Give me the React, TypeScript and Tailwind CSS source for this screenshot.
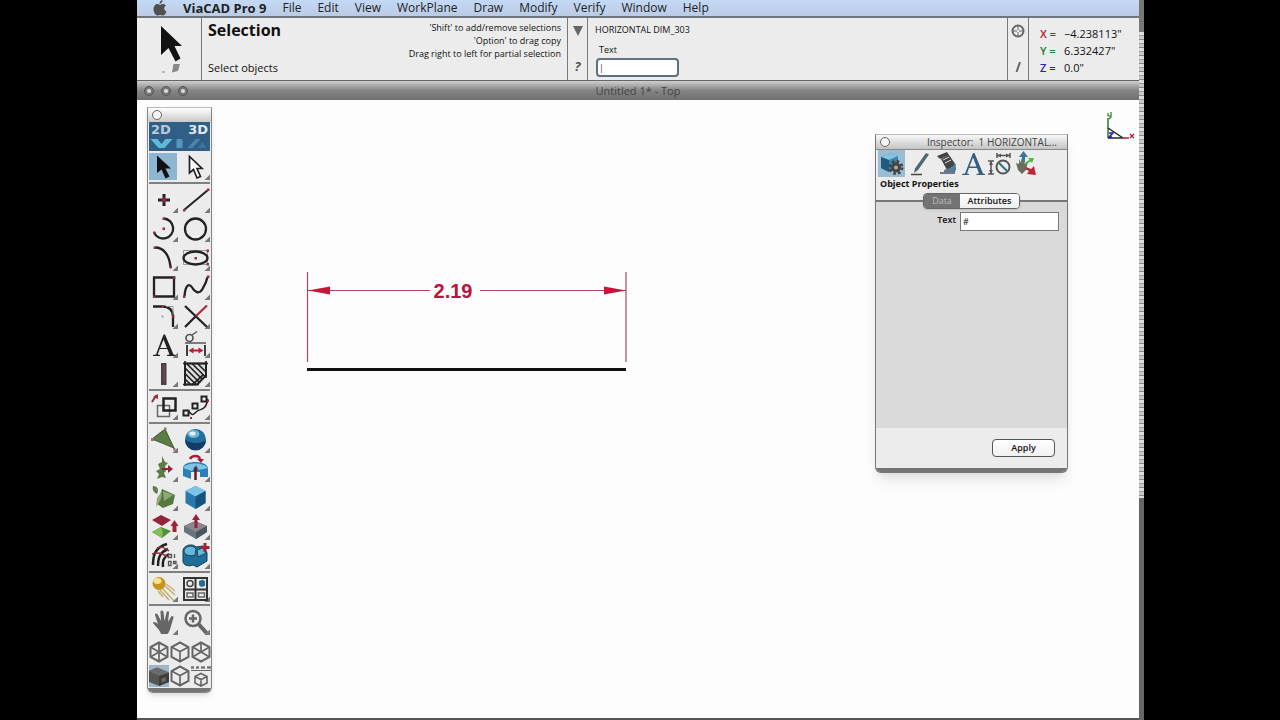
import type { ReactNode } from "react";

const MENUS = ["File", "Edit", "View", "WorkPlane", "Draw", "Modify", "Verify", "Window", "Help"];

function Corner() {
  return <path d="M30 22.5v5.5h-5.5z" fill="#777" />;
}

type ToolProps = { label: string; children: ReactNode; selected?: boolean; corner?: boolean };

function Tool({ label, children, selected = false, corner = true }: ToolProps) {
  return (
    <button type="button" aria-label={label} className="h-[29px] w-[31px]">
      <svg viewBox="0 0 31 29" className="block h-[29px] w-[31px]" fill="none" stroke="none">
        {selected && <rect x="1" y="1" width="28" height="27" fill="#8db6d3" />}
        {corner && <Corner />}
        {children}
      </svg>
    </button>
  );
}

function Separator() {
  return <div className="mx-px my-px h-0.5 bg-[#7f7f7f]" />;
}

function Row({ children }: { children: ReactNode }) {
  return <div className="grid grid-cols-2">{children}</div>;
}

const CUBE = "M12 2.5 L20.5 7 V17 L12 21.5 L3.5 17 V7 Z";

function ViewTool({ label, inner, variant = "wire" }: { label: string; inner?: string; variant?: "wire" | "solid" | "hidden" }) {
  return (
    <button type="button" aria-label={label} className="flex h-6 items-center justify-center">
      <svg viewBox="2 1 20 22" className="block h-[22px] w-5" fill="none" stroke="#666" strokeWidth="2">
        {variant === "wire" && (
          <>
            <path d={CUBE} />
            <path d={inner} strokeWidth="1.7" />
          </>
        )}
        {variant === "solid" && (
          <g stroke="none">
            <rect width="24" height="24" fill="#9db7c8" />
            <path d="M2 7 10 3.500 22 8.5 21 18 12 22 2 18Z" fill="#555" />
            <path d="M2 7 10 3.500 22 8.5 12 12Z" fill="#6b6b6b" />
            <path d="M12 12 22 9v9l-10 4z" fill="#3c3c3c" />
            <path d="M14.500 14.5l4.500-1.500v4l-4.500 2z" fill="#666" />
          </g>
        )}
        {variant === "hidden" && (
          <>
            <path d="M2 3.5h3M7 3.5h3M12 3.5h4M18 3.5h4" strokeWidth="2.5" stroke="#777" />
            <path d="M2 6.5h20" strokeWidth="1" />
            <path d="M12 9.5l6 3v6.5l-6 3-6-3v-6.500zM6 12.5l6 3 6-3M12 15.500V22" strokeWidth="1.6" />
          </>
        )}
      </svg>
    </button>
  );
}

function ToolPalette() {
  return (
    <section
      aria-label="Tools"
      className="absolute left-2.5 top-[7px] w-[65px] overflow-hidden rounded-b-md border border-[#858585] border-t-[#bbb] bg-[#ececec] shadow-md"
    >
      <div className="flex h-3.5 items-center bg-linear-to-b from-white to-[#c9c9c9] px-1">
        <button type="button" aria-label="Close tools" className="size-2.5 rounded-full border border-[#666] bg-[#f4f4f4]" />
      </div>
      <div className="mx-px mb-px h-[29px] bg-[#305e86] text-[#dfeaf2]">
        <div className="flex h-[15px] justify-between px-0.5 font-['DejaVu_Sans',sans-serif] text-[13px] leading-[15px] font-bold">
          <span className="text-[#b9cbdb]">2D</span>
          <span>3D</span>
        </div>
        <svg viewBox="0 0 60 14" className="block h-3.5 w-full" fill="#5fb9d8">
          <path d="M1 2h7l4 5 4-5h7l-8 9H9z" />
          <path d="M27 2h6v9h-6z" opacity=".65" />
          <path d="M38 11l8-9h5l-8 9z" opacity=".45" />
          <path d="M48 11l5-6 4 6z" opacity=".25" />
        </svg>
      </div>
      <Row>
        <Tool label="Select" selected corner={false}>
          <path d="M9 3.500V21l4.500-3.500 4 9 4-2-4-8h5.500z" fill="#111" />
        </Tool>
        <Tool label="Deep select">
          <path d="M9.500 4.500V21l4-3.500 3.500 8.500 3.500-1.500-3.500-8h5z" fill="#fff" stroke="#222" strokeWidth="1.700" />
        </Tool>
      </Row>
      <Separator />
      <Row>
        <Tool label="Point">
          <path d="M10 15h12M16 9v12" stroke="#222" strokeWidth="3" />
          <path d="M13.500 15h5M16 12.500v5" stroke="#b3203c" strokeWidth="1.500" />
        </Tool>
        <Tool label="Line">
          <path d="M4 25 28 5" stroke="#222" strokeWidth="2" />
          <path d="M3 24h2.500v2.500H3zM27 3.500h2.500V6H27z" fill="#94303e" />
        </Tool>
        <Tool label="Arc">
          <path d="M15.500 4.500a10 10 0 1 1-9.500 14" stroke="#222" strokeWidth="2.300" />
          <path d="M14.500 3.500H17V6h-2.500zM5 17.500h2.500V20H5zM14.500 13.500H17V16h-2.500z" fill="#94303e" />
        </Tool>
        <Tool label="Circle">
          <circle cx="15.500" cy="15" r="10.500" stroke="#222" strokeWidth="2.300" />
        </Tool>
        <Tool label="Conic">
          <path d="M7 4.500c9 0 14.500 8 15.500 20" stroke="#222" strokeWidth="2.300" />
          <path d="M5.500 3.500H8V6H5.500zM21.500 23H24v2.500h-2.500z" fill="#94303e" />
        </Tool>
        <Tool label="Ellipse">
          <path d="M3.500 7.500h24v14h-24z" stroke="#999" strokeWidth="1" />
          <ellipse cx="15.500" cy="15" rx="12" ry="6.500" stroke="#222" strokeWidth="2.300" />
          <path d="M14.500 14H17v2.500h-2.500zM26.500 6.500H29V9h-2.500zM26.500 20H29v2.500h-2.500z" fill="#94303e" />
        </Tool>
        <Tool label="Rectangle">
          <path d="M6 5.500h20v19H6z" stroke="#222" strokeWidth="2.300" />
          <path d="M5 23.500h2.500V26H5zM25 4.500h2.500V7H25z" fill="#94303e" />
        </Tool>
        <Tool label="Spline">
          <path d="M4.500 24c1-12 5-13 8-8s7 6 10 1 4-7 5-12" stroke="#222" strokeWidth="2.300" />
          <path d="M3 23.500h2.500V26H3zM27 3.500h2.500V6H27z" fill="#94303e" />
        </Tool>
        <Tool label="Fillet">
          <path d="M5 5.500h9c8 0 11 4 11 10.500v10" stroke="#222" strokeWidth="2.300" />
          <path d="M18 5.500h7v8" stroke="#999" strokeWidth="1" />
          <path d="M13.500 4.500H16V7h-2.500zM24 14h2.500v2.500H24z" fill="#94303e" />
          <path d="M13.500 14.500h2v2h-2z" fill="#8aa" />
        </Tool>
        <Tool label="Trim">
          <path d="M5 5l22 21M5 26 16 15" stroke="#222" strokeWidth="2.300" />
          <path d="M16 15 27 4.500" stroke="#a92f42" strokeWidth="2.300" />
        </Tool>
        <Tool label="Text">
          <path d="M5 26h7v-1l-2.300-.5 2-5.500h7.600l2.200 5.500-2.500.5v1h8.500v-1l-2-.5L17 4.500h-1.500L8 24.500l-3 .5zM12.200 18l3.300-8.500 3.400 8.500z" fill="#222" />
        </Tool>
        <Tool label="Dimension">
          <circle cx="9.500" cy="8" r="3.500" stroke="#555" strokeWidth="1.700" />
          <path d="M12 5l5-3.500M5 13h21" stroke="#555" strokeWidth="1.500" />
          <path d="M7 15v11M25 15v11" stroke="#222" strokeWidth="1.700" />
          <path d="M8.500 20.500l5-3v2h5v-2l5 3-5 3v-2h-5v2z" fill="#b3203c" />
        </Tool>
        <Tool label="Wall">
          <path d="M13 4h5.500v22H13z" fill="#444" />
          <path d="M15.500 6h1v18h-1z" fill="#a4404d" />
        </Tool>
        <Tool label="Hatch">
          <path d="M5 4.500h21v12l-9 9H5z" fill="#ddd" stroke="#222" strokeWidth="2" />
          <path d="M5 20l5.500 5.500M5 14.500 15.500 25M5 9l15 15M7 5l15 15M12.500 5 25 17.500M18 5l8 8" stroke="#222" strokeWidth="1.700" />
          <path d="M3 4.500h25M5 2v25M26 2v17M3 25.500h16M12 26l11-10" stroke="#222" strokeWidth="1.700" />
        </Tool>
      </Row>
      <Separator />
      <Row>
        <Tool label="Transform">
          <path d="M4 10 8 3.500" stroke="#94303e" strokeWidth="2" />
          <path d="M5 5l5-3v5z" fill="#94303e" />
          <path d="M9.500 13.500h12v11h-12z" stroke="#666" strokeWidth="1.500" />
          <path d="M15.500 6.500h12v12h-12z" stroke="#222" strokeWidth="2.500" />
        </Tool>
        <Tool label="Edit curve">
          <path d="M5 21c4-8 5 6 10 0s10 0 13-14" stroke="#222" strokeWidth="1.500" />
          <path d="M3.500 18.500h5v5h-5zM12.500 11.500h5v5h-5zM21.500 4.500h5v5h-5z" fill="#eee" stroke="#222" strokeWidth="2" />
          <path d="M10 25h2v2h-2zM27 8h2v2h-2z" fill="#94303e" />
        </Tool>
      </Row>
      <Separator />
      <Row>
        <Tool label="Surface">
          <path d="M4 14 17 4l9 19z" fill="#5c7c45" stroke="#405d30" />
          <path d="M3 13h3v3H3zM16 2.500h2.500V5H16zM25 23h2.500v2.500H25z" fill="#94776c" />
        </Tool>
        <Tool label="Sphere">
          <circle cx="15.500" cy="14.500" r="10.500" fill="#236da1" />
          <path d="M5 15a10.500 10.500 0 0 0 21 0c-5 4-14 4-21 0z" fill="#123d66" />
          <ellipse cx="13.500" cy="9" rx="6" ry="4" fill="#6db8dc" />
          <ellipse cx="12.500" cy="8.500" rx="3" ry="2" fill="#e2f3fb" />
        </Tool>
        <Tool label="Extrude surface">
          <path d="M14 2 17 8l3 1-3 3 1 5-2 2 2 5-4-1-5 2 2-5-3-3 4-2-2-5 4-2z" fill="#5c7c45" />
          <path d="M14 14h6v-3l5 4-5 4v-3h-6z" fill="#94203a" />
        </Tool>
        <Tool label="Revolve">
          <path d="M3 14c0-8 24-8 25 0v9h-8v-5h-9v7l-8-3z" fill="#2c7fb5" />
          <path d="M3 14c3-6 21-6 25 0l-9 2-3-5-4 6z" fill="#7fc3e5" />
          <path d="M15.500 26V13" stroke="#661826" strokeWidth="2.500" />
          <path d="M10 5c2-4 9-4 10 0" stroke="#a3203a" strokeWidth="2.500" />
          <path d="M17 5h7l-3 4z" fill="#a3203a" />
        </Tool>
        <Tool label="Loft">
          <path d="M5 3c5 0 6 4 4 8-4-2-5-5-4-8z" fill="#617b52" />
          <path d="M14 6 27 12l-2 9-10 4-6-4z" fill="#55793e" />
          <path d="M14 8l-1 8-5 8 1-9zM15 8l10 4-9 6z" fill="#91aa75" />
        </Tool>
        <Tool label="Block">
          <path d="M15.500 3 25.500 8v12l-10 6-10-6V8z" fill="#2b78ad" />
          <path d="M15.500 3 25.500 8l-10 5.500L5.500 8z" fill="#7ac4e8" />
          <path d="M15.500 13.500 25.500 8v12l-10 6z" fill="#17517f" />
        </Tool>
        <Tool label="Offset surface">
          <path d="M4 8 13 3l10 5-9 6z" fill="#96233c" />
          <path d="M4 20l9-5 10 4-9 7z" fill="#529238" />
          <path d="M4 20l9-5 2 5-1 6z" fill="#83bd5a" />
          <path d="M24.500 20v-6h-2l4-6 4 6h-2v6z" fill="#a3203a" />
        </Tool>
        <Tool label="Push pull">
          <path d="M4 14 15 9l12 5v6l-11 7-12-7z" fill="#66747f" />
          <path d="M4 14 15 9l12 5-11 6z" fill="#8d8589" />
          <path d="M16 20l11-6v6l-11 7z" fill="#48545e" />
          <path d="M14.500 16V8H12l4-6 4 6h-2.500v8z" fill="#96233c" />
        </Tool>
        <Tool label="Surface analysis">
          <path d="M5 24C5 13 8 6 19 3M10 25c0-10 3-14 10-17M15 26c-1-8 2-11 6-13" stroke="#222" strokeWidth="2.500" />
          <path d="M4 13c5-2 10-1 16 3M9 7c5-2 8 0 12 3" stroke="#94303e" strokeWidth="1.500" />
          <path d="M20.500 13.500h3v3h-3zM26.500 13v4M20.500 20.500h2.500v4h-2.500zM25.500 20.500H28v2h-2.500z" stroke="#555" strokeWidth="1.300" />
        </Tool>
        <Tool label="Boolean add">
          <path d="M3 10c0-6 10-8 13-4l7-1 4 7v8l-10 6-4-2c-5 2-10 0-10-4z" fill="#1f6d98" stroke="#143d56" />
          <path d="M4 10c0-5 9-7 12-2l-1 6c-5 2-11 0-11-4zM17 9l6-2 3 5-8 4z" fill="#64b7d6" stroke="#174761" />
          <path d="M20.500 6.500h9M25 2v9" stroke="#a3203a" strokeWidth="3" />
        </Tool>
      </Row>
      <Separator />
      <Row>
        <Tool label="Render">
          <path d="M12 16l9 10M14 14l12 13M17 12l10 9M18 10l9 7M10 17l5 6" stroke="#c5ae72" strokeWidth="1.500" />
          <circle cx="11" cy="9.500" r="6.500" fill="#c4941f" />
          <ellipse cx="9.500" cy="7" rx="4" ry="3" fill="#f7e38d" />
        </Tool>
        <Tool label="Drawing layout">
          <path d="M4 4h23v22H4zM15.500 4v22M4 15.500h23" stroke="#333" strokeWidth="2" />
          <circle cx="10" cy="9.500" r="3" stroke="#444" strokeWidth="1.500" />
          <path d="M19 7l4-1.500 2 2v4.500l-4 1-2-2z" fill="#236c98" />
          <path d="M7 19h6v4H7zM18.500 19h6v4h-6z" stroke="#666" strokeWidth="1.500" />
        </Tool>
      </Row>
      <Separator />
      <Row>
        <Tool label="Pan">
          <path
            d="M13 27c-1-4-5-7-8-11 0-2 3-1 5 1L7 8c0-2 2-2 3 0l3 6-.5-9c0-2 2.500-2 3 0l1 9 2-8.500c.5-2 3-1.500 2.500.5l-1 9 3-5c1-2 3-1 2.500 1-2 5-3 13-6 16z"
            fill="#666"
          />
        </Tool>
        <Tool label="Zoom">
          <circle cx="13" cy="11.500" r="7.500" stroke="#666" strokeWidth="2.500" />
          <path d="M9 11.500h8M13 7.500v8" stroke="#666" strokeWidth="2.500" />
          <path d="M18.500 17l8 9" stroke="#666" strokeWidth="4" />
        </Tool>
      </Row>
      <div className="mt-1 grid grid-cols-3">
        <ViewTool label="Wireframe view" inner="M3.500 7 20.500 17M20.500 7 3.500 17M12 2.500v19" />
        <ViewTool label="Isometric view" inner="M3.500 7 12 11.500 20.500 7M12 11.500v10" />
        <ViewTool label="Hidden line view" inner="M3.500 7 20.500 17M20.500 7 3.500 17M12 2.500v9" />
        <ViewTool label="Shaded view" variant="solid" />
        <ViewTool label="Front view" inner="M3.500 7 12 11.500 20.500 7M12 11.500v10" />
        <ViewTool label="View options" variant="hidden" />
      </div>
      <div className="h-1 bg-[#747474]" />
    </section>
  );
}

function InspectorTab({ label, selected = false, children }: { label: string; selected?: boolean; children: ReactNode }) {
  return (
    <button type="button" aria-label={label} className={selected ? "bg-[#9bbdd4]" : ""}>
      <svg viewBox="0 0 27 27" className="block size-[27px]" fill="none">
        {children}
      </svg>
    </button>
  );
}

function Inspector() {
  return (
    <section
      aria-label="Inspector"
      className="absolute right-[71px] top-[34px] w-[193px] overflow-hidden rounded-b-md border border-[#777] border-t-[#bbb] bg-[#ececec] shadow-lg"
    >
      <div className="flex h-3.5 items-center justify-between bg-linear-to-b from-[#f8f8f8] to-[#c4c4c4] pr-2.5 pl-1">
        <button type="button" aria-label="Close inspector" className="size-2.5 rounded-full border border-[#666] bg-[#f4f4f4]" />
        <h2 className="text-[10px] leading-[14px] whitespace-pre text-[#444]">Inspector:  1 HORIZONTAL...</h2>
      </div>
      <div className="flex border-t border-[#888] px-0.5">
        <InspectorTab label="Object properties" selected>
          <path d="M3 7 12 3l8 3v12l-9 4-8-4z" fill="#3c83ab" />
          <path d="M3 7 12 3l8 3-9 4z" fill="#85c4de" />
          <path d="M3 7l8 3v12l-8-4z" fill="#205a82" />
          <circle cx="18" cy="17.500" r="5" fill="#444" />
          <circle cx="18" cy="17.500" r="6" stroke="#444" strokeWidth="3" strokeDasharray="2.500 2.200" />
          <circle cx="18" cy="17.500" r="2" fill="#aaa" />
        </InspectorTab>
        <InspectorTab label="Pen">
          <path d="M21 3l3 1.500L13 20l-4 3 1-4.500z" fill="#50656f" />
          <path d="M6 24.500h11" stroke="#444" strokeWidth="1.500" />
        </InspectorTab>
        <InspectorTab label="Fill">
          <path d="M5 6 15 2l2 3-9 4zM9 9l8-4 7 10-9 5z" fill="#444" />
          <path d="M11 10l6-3M13 13l6-3" stroke="#ddd" />
          <path d="M22 12c2 4 3 7 1 10h-11v-2l9-3z" fill="#537c99" />
          <path d="M8 23h15" stroke="#456" strokeWidth="1.500" />
        </InspectorTab>
        <InspectorTab label="Text style">
          <path d="M3 25h7v-1l-2-.5 2-5.500h8l2 5.500-2.500.5v1H26v-1l-2-.5L15.500 3H14L6 23.500 3 24zM10.500 16.500l3.500-9 3.500 9z" fill="#365f7d" />
        </InspectorTab>
        <InspectorTab label="Dimension style">
          <path d="M11 3v5M24 3v5M11 5.500h13M2 11h6M2 24h6M5 11v13" stroke="#555" strokeWidth="1.500" />
          <path d="M11 5.500l4-2v4zM24 5.500l-4-2v4zM5 11l-2 4h4zM5 24l-2-4h4z" fill="#555" />
          <circle cx="17" cy="17" r="6.500" stroke="#555" strokeWidth="2" />
          <path d="M13 13l8 8" stroke="#2f6c8d" strokeWidth="2" />
        </InspectorTab>
        <InspectorTab label="Transform">
          <path d="M9 12V7H6l4.500-6L15 7h-3v5z" fill="#34799a" />
          <path d="M3 13l3 1V9l2 4V8l2 5V8l2 6 3-3-2 9-4 4-4-4z" fill="#68705d" />
          <path d="M12 14l6-4" stroke="#4bb848" strokeWidth="2" />
          <path d="M15 8l6 0-2 5z" fill="#4bb848" />
          <path d="M13 17l5 2 3-3 2 9-9-1 2-3-4-2z" fill="#b92739" />
        </InspectorTab>
      </div>
      <h3 className="px-1 text-[9px] leading-[14px] font-bold">Object Properties</h3>
      <div className="mt-0.5 flex items-center">
        <div className="h-0.5 flex-1 bg-[#777]" />
        <div className="flex h-4 overflow-hidden rounded-sm border border-[#666] text-[9px] leading-[14px] shadow-sm">
          <button type="button" className="w-9 bg-[#737373] text-[#bbb]">Data</button>
          <button type="button" className="w-[59px] bg-linear-to-b from-white to-[#eee] font-semibold">Attributes</button>
        </div>
        <div className="h-0.5 flex-1 bg-[#777]" />
      </div>
      <div className="-mt-[7px] h-[226px] bg-[#dadada] pt-2.5 pr-2">
        <div className="flex justify-end gap-1 text-[9px]">
          <label htmlFor="dimension-text" className="leading-4 font-semibold">Text</label>
          <input
            id="dimension-text"
            defaultValue="#"
            className="h-[19px] w-[99px] border border-[#777] bg-white px-0.5 leading-4 outline-none"
          />
        </div>
      </div>
      <div className="flex h-10 items-center justify-end pr-3">
        <button
          type="button"
          className="h-[18px] w-[63px] rounded-[4px] border border-[#555] bg-linear-to-b from-white to-[#f0f0f0] text-[9px] leading-4 font-semibold"
        >
          Apply
        </button>
      </div>
      <div className="h-1 bg-[#747474]" />
    </section>
  );
}

function MenuBar() {
  return (
    <nav className="flex h-[18px] items-center gap-4 border-b-2 border-[#70747c] bg-linear-to-b from-[#c3d9f5] to-[#bccbe6] pl-4 text-xs leading-4 text-[#222]">
      <button type="button" aria-label="System menu">
        <svg viewBox="0 0 14 16" className="block h-4 w-3.5" fill="#505050">
          <path d="M9.500 0c.3 2-1.200 3.700-3 3.700C6.300 2 7.800.4 9.500 0zM7 4.800c1 0 1.600-.8 3-.8 1.200 0 2.300.6 3 1.600-2.600 1.500-2.200 5 .5 6C12.700 14 11.500 15.500 10 15.500c-1.100 0-1.500-.6-2.800-.6s-1.700.6-2.800.6C2.500 15.500.5 12 .5 9 .5 6 2.300 4 4.400 4 5.600 4 6.300 4.800 7 4.800z" />
        </svg>
      </button>
      <button type="button" className="text-[13px] font-bold">ViaCAD Pro 9</button>
      {MENUS.map((menu) => (
        <button type="button" key={menu} className="font-medium">{menu}</button>
      ))}
    </nav>
  );
}

function PromptBar() {
  return (
    <header className="flex h-[63px] border-b border-[#666] bg-[#ececec] text-[#111]">
      <div className="w-[65px] shrink-0 border-r border-[#777]">
        <svg viewBox="0 0 64 62" className="block h-[62px] w-16">
          <path d="M24 8v29l7.500-7 7 13.500 5-3L37.500 28H45z" fill="#111" />
          <path d="M36.500 46h6.500l-2 7-6 1.500z" fill="#888" />
          <path d="M25 53h3v2h-3z" fill="#bbb" />
        </svg>
      </div>
      <div className="flex w-[366px] shrink-0 justify-between border-r border-[#777] pr-1.5 pl-1.5">
        <div className="flex flex-col justify-between pt-0.5 pb-1">
          <h1 className="text-base leading-5 font-bold">Selection</h1>
          <p className="text-[11px] leading-4 font-medium">Select objects</p>
        </div>
        <p className="pt-[3px] text-right text-[9px] leading-[13px] font-medium">
          'Shift' to add/remove selections
          <br />
          'Option' to drag copy
          <br />
          Drag right to left for partial selection
        </p>
      </div>
      <div className="flex w-5 shrink-0 flex-col items-center justify-between border-r border-[#777] pt-2 pb-1.5">
        <button type="button" aria-label="Options">
          <svg viewBox="0 0 10 10" className="block size-2.5"><path d="M0 0h10L5 10z" fill="#666" /></svg>
        </button>
        <button type="button" aria-label="Help" className="text-[13px] leading-4 font-bold text-[#555] italic">?</button>
      </div>
      <div className="flex-1 pt-1 pl-[7px] text-[9px] font-medium">
        <div className="leading-4">HORIZONTAL DIM_303</div>
        <label htmlFor="prompt-text" className="mt-1 block pl-1 leading-4">Text</label>
        <input
          id="prompt-text"
          className="ml-px block h-[19px] w-[83px] rounded-sm border-2 border-[#5a7186] bg-white px-px leading-4 outline-none placeholder:text-[#333]"
          placeholder="|"
        />
      </div>
      <div className="flex w-[22px] shrink-0 flex-col items-center justify-between border-x border-[#777] pt-1.5 pb-1.5">
        <button type="button" aria-label="Snap">
          <svg viewBox="0 0 14 14" className="block size-3.5" fill="none" stroke="#666">
            <circle cx="7" cy="7" r="5.500" strokeWidth="2" />
            <path d="M7 2v4M7 8v4M2 7h4M8 7h4" />
          </svg>
        </button>
        <button type="button" aria-label="Coordinate entry">
          <svg viewBox="0 0 8 14" className="block h-3.5 w-2"><path d="M2.500 12 6 2" stroke="#666" strokeWidth="2" /></svg>
        </button>
      </div>
      <dl className="grid w-[110px] shrink-0 grid-cols-[24px_1fr] content-start pt-[7px] pl-[11px] text-[11px] leading-[17px] font-medium">
        <dt className="font-semibold text-[#b51638]">X =</dt>
        <dd>−4.238113"</dd>
        <dt className="font-semibold text-[#267b2c]">Y =</dt>
        <dd>6.332427"</dd>
        <dt className="font-semibold text-[#2620a8]">Z =</dt>
        <dd>0.0"</dd>
      </dl>
    </header>
  );
}

function DocumentTitle() {
  return (
    <div className="relative flex h-[19px] items-center justify-center bg-linear-to-b from-[#cfcfcf] via-[#858585] via-50% to-[#707070]">
      <div className="absolute left-[7px] flex gap-[7px]">
        {["Close", "Minimize", "Zoom window"].map((label) => (
          <button type="button" key={label} aria-label={label} className="flex size-2.5 items-center justify-center rounded-full border border-[#555] bg-[#777]">
            <span className="size-1 rounded-full bg-[#ddd]" />
          </button>
        ))}
      </div>
      <span className="text-[11px] leading-4 font-medium text-[#444]">Untitled 1* - Top</span>
    </div>
  );
}

function Drawing() {
  return (
    <svg viewBox="0 0 322 102" className="absolute left-[169px] top-[171px] h-[102px] w-[322px]" role="img" aria-label="Horizontal dimension 2.19">
      <path d="M1.500 1v90M320 1v90" stroke="#a84a62" strokeWidth="1.200" />
      <path d="M2 19.500h122M174 19.500h146" stroke="#a84a62" strokeWidth="1.200" />
      <path d="M2 19.500l22-4v8zM320 19.500l-22-4v8z" fill="#c8143c" />
      <path d="M1 98.500h319" stroke="#111" strokeWidth="3" />
      <text x="147" y="27" textAnchor="middle" fill="#b8143c" className="font-['Liberation_Sans',sans-serif] text-xl font-bold">2.19</text>
    </svg>
  );
}

function AxisMarker() {
  return (
    <svg viewBox="0 0 30 32" className="absolute right-1 top-2 h-8 w-[30px]" fill="none">
      <path d="M3 30V10" stroke="#267b2c" strokeWidth="1.500" />
      <path d="M3 5v3h3M6 4v5l-2 2" stroke="#267b2c" strokeWidth="1.200" />
      <path d="M3 20 18 30" stroke="#222" strokeWidth="1.500" />
      <path d="M3 30h14" stroke="#222" strokeWidth="1.500" />
      <path d="M17 30h7" stroke="#b51638" strokeWidth="1.500" />
      <path d="M25 26l4 4M29 26l-4 4" stroke="#b51638" strokeWidth="1.200" />
      <path d="M4 25h4l-4 4h3" stroke="#2620a8" strokeWidth="1.500" />
    </svg>
  );
}

export default function App() {
  return (
    <div className="flex min-h-screen bg-black pr-[136px] pl-[137px] font-['Open_Sans','Noto_Sans',sans-serif] text-[#111]">
      <div className="flex min-w-0 flex-1 flex-col">
        <MenuBar />
        <PromptBar />
        <DocumentTitle />
        <main className="relative flex-1 border-b-2 border-[#555] bg-[#fdfdfd]">
          <Drawing />
          <AxisMarker />
          <ToolPalette />
          <Inspector />
        </main>
      </div>
      <div className="flex w-[5px] flex-col" aria-hidden="true">
        <div className="h-8 bg-[#747a72]" />
        <div className="flex-[466] bg-[repeating-linear-gradient(#ddd_0_3px,#999_3px_4px,#c8c8c8_4px_7px,#888_7px_8px)]" />
        <div className="flex-[222] bg-[#666]" />
      </div>
    </div>
  );
}
